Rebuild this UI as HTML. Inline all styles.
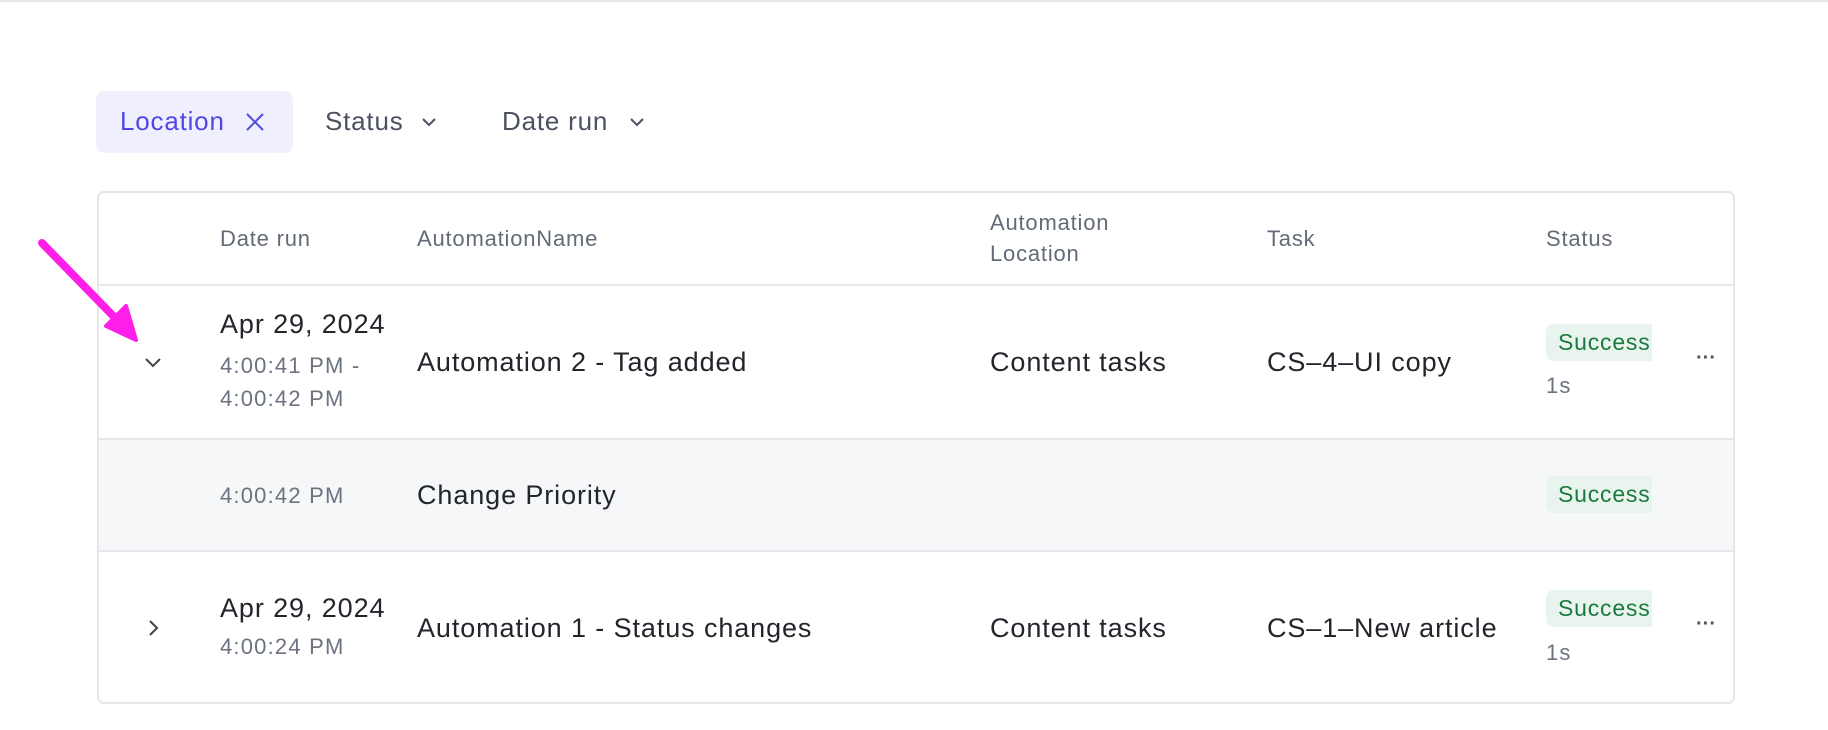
<!DOCTYPE html>
<html><head><style>
*{margin:0;padding:0;box-sizing:border-box}
body{width:1828px;height:730px;background:#fff;font-family:"Liberation Sans",sans-serif;position:relative;overflow:hidden;color:#1f2328}
.a{position:absolute;white-space:nowrap}
.topline{position:absolute;left:0;top:0;width:1828px;height:2px;background:#e5e7eb}
.chip{position:absolute;left:96px;top:91px;width:197px;height:62px;background:#efeffd;border-radius:9px}
.f{font-size:26px;letter-spacing:0.8px;color:#4b5160}
.h{font-size:22px;letter-spacing:0.8px;color:#636b78;line-height:31px}
.b{font-size:27px;letter-spacing:0.9px;color:#22252b}
.g{font-size:22px;letter-spacing:1.2px;color:#6b7280}
.tbl{position:absolute;left:97px;top:191px;width:1638px;height:513px;border:2px solid #e6e7ea;border-radius:7px;overflow:hidden}
.ok{position:absolute;width:106px;height:37px;background:#e9f4ee;border-radius:8px 0 0 8px;color:#1a7a3d;font-size:23px;letter-spacing:0.8px;line-height:37px;padding-left:12px;overflow:hidden}
.dots{font-size:20px;color:#555;font-weight:bold;letter-spacing:0px}
</style></head><body>
<div class="topline"></div>
<div class="chip"></div>
<div class="a f" style="left:120px;top:106px;color:#5147e5">Location</div>
<svg class="a" style="left:244px;top:111px" width="22" height="22" viewBox="0 0 22 22"><path d="M3 3L19 19M19 3L3 19" stroke="#5147e5" stroke-width="2" fill="none"/></svg>
<div class="a f" style="left:325px;top:106px">Status</div>
<svg class="a" style="left:421px;top:116px" width="16" height="12" viewBox="0 0 16 12"><path d="M2 3l6 6 6-6" stroke="#4b5160" stroke-width="2" fill="none"/></svg>
<div class="a f" style="left:502px;top:106px">Date run</div>
<svg class="a" style="left:629px;top:116px" width="16" height="12" viewBox="0 0 16 12"><path d="M2 3l6 6 6-6" stroke="#4b5160" stroke-width="2" fill="none"/></svg>

<div class="tbl">
 <div class="a" style="left:0;top:91px;width:1640px;height:2px;background:#e6e7ea"></div>
 <div class="a" style="left:0;top:245px;width:1640px;height:2px;background:#e6e7ea"></div>
 <div class="a" style="left:0;top:247px;width:1640px;height:110px;background:#f6f7f9"></div>
 <div class="a" style="left:0;top:357px;width:1640px;height:2px;background:#e6e7ea"></div>
</div>

<div class="a h" style="left:220px;top:223px">Date run</div>
<div class="a h" style="left:417px;top:223px">AutomationName</div>
<div class="a h" style="left:990px;top:207px">Automation<br>Location</div>
<div class="a h" style="left:1267px;top:223px">Task</div>
<div class="a h" style="left:1546px;top:223px">Status</div>

<svg class="a" style="left:143px;top:355px" width="20" height="14" viewBox="0 0 20 14"><path d="M3 4l7 7 7-7" stroke="#444" stroke-width="2" fill="none"/></svg>
<div class="a b" style="left:220px;top:309px">Apr 29, 2024</div>
<div class="a g" style="left:220px;top:353px">4:00:41 PM -</div>
<div class="a g" style="left:220px;top:386px">4:00:42 PM</div>
<div class="a b" style="left:417px;top:347px">Automation 2 - Tag added</div>
<div class="a b" style="left:990px;top:347px">Content tasks</div>
<div class="a b" style="left:1267px;top:347px">CS–4–UI copy</div>
<div class="ok" style="left:1546px;top:324px">Success</div>
<div class="a g" style="left:1546px;top:373px">1s</div>
<div class="a dots" style="left:1696px;top:347px">···</div>

<div class="a g" style="left:220px;top:483px">4:00:42 PM</div>
<div class="a b" style="left:417px;top:480px">Change Priority</div>
<div class="ok" style="left:1546px;top:476px">Success</div>

<svg class="a" style="left:146px;top:618px" width="14" height="20" viewBox="0 0 14 20"><path d="M4 3l7 7-7 7" stroke="#444" stroke-width="2" fill="none"/></svg>
<div class="a b" style="left:220px;top:593px">Apr 29, 2024</div>
<div class="a g" style="left:220px;top:634px">4:00:24 PM</div>
<div class="a b" style="left:417px;top:613px">Automation 1 - Status changes</div>
<div class="a b" style="left:990px;top:613px">Content tasks</div>
<div class="a b" style="left:1267px;top:613px">CS–1–New article</div>
<div class="ok" style="left:1546px;top:590px">Success</div>
<div class="a g" style="left:1546px;top:640px">1s</div>
<div class="a dots" style="left:1696px;top:613px">···</div>

<svg class="a" style="left:0;top:0" width="200" height="400"><path d="M42 243L122 325" stroke="#ff1fe8" stroke-width="8" stroke-linecap="round"/><path d="M136 340L106 326L126 306Z" fill="#ff1fe8" stroke="#ff1fe8" stroke-width="4" stroke-linejoin="round"/></svg>
</body></html>
